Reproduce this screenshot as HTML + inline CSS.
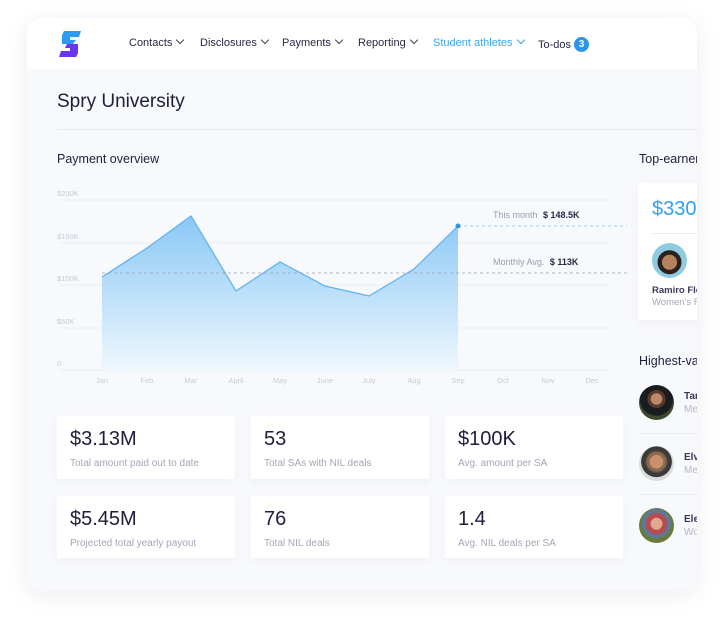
<!DOCTYPE html>
<html><head><meta charset="utf-8"><style>
*{margin:0;padding:0;box-sizing:border-box}
body{width:724px;height:628px;background:#fff;font-family:"Liberation Sans",sans-serif;position:relative;overflow:hidden;color:#1f1d3d}
.frame{position:absolute;left:27px;top:18px;width:670px;height:573px;border-radius:16px;background:#f8f9fc;overflow:hidden;box-shadow:0 4px 24px rgba(20,30,60,.08)}
.hdr{position:absolute;left:0;top:0;width:670px;height:51px;background:#fff}
.nav{position:absolute;top:19px;font-size:11px;color:#2a2845;white-space:nowrap}
.chev{display:inline-block;width:6px;height:6px;border-right:1.2px solid #444;border-bottom:1.2px solid #444;transform:rotate(45deg);margin-left:5px;position:relative;top:-3px}
.a{position:absolute;white-space:nowrap}
.card{position:absolute;background:#fff;box-shadow:0 3px 10px rgba(20,30,60,.04)}
.big{position:absolute;left:13px;top:12px;font-size:20px;color:#1f1d3d}
.sm{position:absolute;left:13px;top:42px;font-size:10px;color:#a3a6b6}
.av{position:absolute;border-radius:50%;width:35px;height:35px}
</style></head><body>
<div class="frame">
<div class="hdr">
<svg style="position:absolute;left:32px;top:13px" width="22" height="26" viewBox="0 0 22 26"><path d="M5 0H22L20 6H11V9H17L14 13H3V4Z" fill="#2b9cf2"/><path d="M8 13H19V22L17 26H0L2 20H11V17H6Z" fill="#6a35f0"/></svg>
<div class="nav" style="left:102px">Contacts<span class="chev"></span></div>
<div class="nav" style="left:173px">Disclosures<span class="chev"></span></div>
<div class="nav" style="left:255px">Payments<span class="chev"></span></div>
<div class="nav" style="left:331px">Reporting<span class="chev"></span></div>
<div class="nav" style="left:406px;color:#3ba4f2">Student athletes<span class="chev" style="border-color:#3ba4f2"></span></div>
<div class="nav" style="left:511px">To-dos <span style="display:inline-block;width:15px;height:15px;border-radius:50%;background:#2b95ee;color:#fff;text-align:center;font-size:10px;line-height:15px;font-weight:bold;vertical-align:1px">3</span></div>
</div>
<div class="a" style="left:30px;top:73px;font-size:19px">Spry University</div>
<div style="position:absolute;left:30px;top:111px;width:640px;height:1px;background:#e8eaf0"></div>
<div class="a" style="left:30px;top:134px;font-size:12.5px">Payment overview</div>
<div class="a" style="left:612px;top:134px;font-size:12.5px">Top-earners</div>
<div class="card" style="left:611px;top:165px;width:80px;height:137px">
<div class="a" style="left:14px;top:15px;font-size:20px;color:#2ea0f3">$330K</div>
<div style="position:absolute;left:14px;top:50px;width:70px;height:1px;background:#eee"></div>
<div class="av" style="left:14px;top:60px;background:radial-gradient(circle at 50% 55%,#b5825e 0 28%,#2a211c 30% 45%,#8fcbe0 47%)"></div>
<div class="a" style="left:14px;top:102px;font-size:9.5px;font-weight:bold;color:#3a3856">Ramiro Flores</div>
<div class="a" style="left:14px;top:114px;font-size:9.5px;color:#a3a6b6">Women's Football</div>
</div>
<div class="a" style="left:612px;top:336px;font-size:12.5px">Highest-valued</div>
<div class="av" style="left:612px;top:367px;background:radial-gradient(circle at 50% 40%,#c08a6a 0 20%,#5a3a2a 22% 32%,#1a1d1f 34% 60%,#3c4a2c 62%)"></div>
<div class="a" style="left:657px;top:373px;font-size:10px;font-weight:bold;color:#3a3856">Tanner</div>
<div class="a" style="left:657px;top:386px;font-size:10px;color:#b3b6c6">Men's</div>
<div style="position:absolute;left:612px;top:415px;width:60px;height:1px;background:#eceef2"></div>
<div class="av" style="left:612px;top:428px;background:radial-gradient(circle at 50% 45%,#c9906e 0 25%,#8a6a50 27% 35%,#3a3a3a 45% 58%,#d8dcdc 60%)"></div>
<div class="a" style="left:657px;top:434px;font-size:10px;font-weight:bold;color:#3a3856">Elvis</div>
<div class="a" style="left:657px;top:447px;font-size:10px;color:#b3b6c6">Men's</div>
<div style="position:absolute;left:612px;top:476px;width:60px;height:1px;background:#eceef2"></div>
<div class="av" style="left:612px;top:490px;background:radial-gradient(circle at 50% 45%,#e0a890 0 22%,#b84a50 24% 38%,#5a7a98 45% 55%,#6a7a3a 57%)"></div>
<div class="a" style="left:657px;top:496px;font-size:10px;font-weight:bold;color:#3a3856">Elena</div>
<div class="a" style="left:657px;top:509px;font-size:10px;color:#b3b6c6">Women's</div>
<svg style="position:absolute;left:0;top:0" width="600" height="380">
<defs><linearGradient id="g" x1="0" y1="0" x2="0" y2="1"><stop offset="0" stop-color="#8ac8f6"/><stop offset="1" stop-color="#eef7fe"/></linearGradient></defs>
<g stroke="#ebedf2" stroke-width="1"><line x1="33" y1="182" x2="581" y2="182"/><line x1="33" y1="225" x2="581" y2="225"/><line x1="33" y1="267" x2="581" y2="267"/><line x1="33" y1="310" x2="581" y2="310"/><line x1="33" y1="352" x2="581" y2="352"/></g>
<g font-size="7.5" fill="#c8cad4" font-family="Liberation Sans"><text x="30" y="178">$200K</text><text x="30" y="221">$150K</text><text x="30" y="263">$100K</text><text x="30" y="306">$50K</text><text x="30" y="348">0</text>
<g text-anchor="middle"><text x="75" y="365">Jan</text><text x="120" y="365">Feb</text><text x="164" y="365">Mar</text><text x="209" y="365">April</text><text x="253" y="365">May</text><text x="298" y="365">June</text><text x="342" y="365">July</text><text x="387" y="365">Aug</text><text x="431" y="365">Sep</text><text x="476" y="365">Oct</text><text x="521" y="365">Nov</text><text x="565" y="365">Dec</text></g></g>
<path d="M75 259L120 230L164 198L209 273L253 244L298 268L342 278L387 251L431 208V352H75Z" fill="url(#g)"/>
<path d="M75 259L120 230L164 198L209 273L253 244L298 268L342 278L387 251L431 208" fill="none" stroke="#5cb2f3" stroke-width="1.2"/>
<line x1="75" y1="255" x2="600" y2="255" stroke="#9aa0b0" stroke-dasharray="3 3" stroke-width=".8"/>
<line x1="431" y1="208" x2="600" y2="208" stroke="#7cc0f5" stroke-dasharray="3 3" stroke-width=".8"/>
<circle cx="431" cy="208" r="2.5" fill="#2b95ee"/>
<text x="466" y="200" font-size="9" fill="#9a9daf">This month <tspan font-weight="bold" fill="#2a2845" dx="3">$ 148.5K</tspan></text>
<text x="466" y="247" font-size="9" fill="#9a9daf">Monthly Avg. <tspan font-weight="bold" fill="#2a2845" dx="3">$ 113K</tspan></text>
</svg>
<div class="card" style="left:30px;top:398px;width:178px;height:63px"><div class="big">$3.13M</div><div class="sm">Total amount paid out to date</div></div>
<div class="card" style="left:224px;top:398px;width:178px;height:63px"><div class="big">53</div><div class="sm">Total SAs with NIL deals</div></div>
<div class="card" style="left:418px;top:398px;width:178px;height:63px"><div class="big">$100K</div><div class="sm">Avg. amount per SA</div></div>
<div class="card" style="left:30px;top:478px;width:178px;height:62px"><div class="big">$5.45M</div><div class="sm">Projected total yearly payout</div></div>
<div class="card" style="left:224px;top:478px;width:178px;height:62px"><div class="big">76</div><div class="sm">Total NIL deals</div></div>
<div class="card" style="left:418px;top:478px;width:178px;height:62px"><div class="big">1.4</div><div class="sm">Avg. NIL deals per SA</div></div>
</div>
</body></html>
